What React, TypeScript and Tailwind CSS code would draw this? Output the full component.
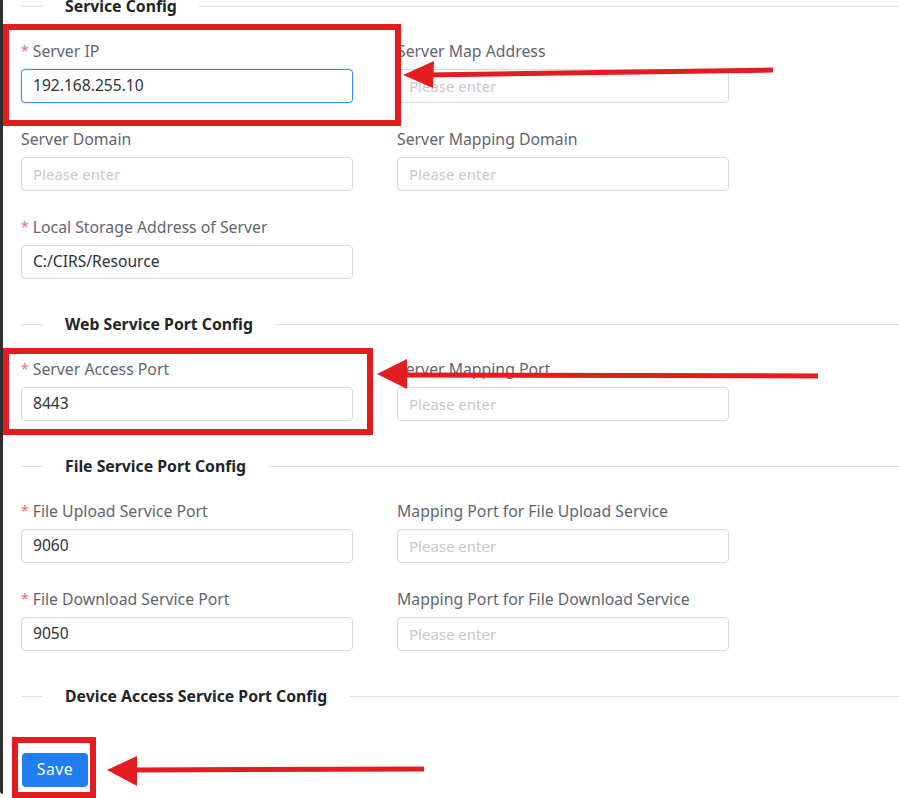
import React from 'react';

type Field = { label: string; required?: boolean; value?: string; focused?: boolean } | null;

const font = { fontFamily: '"Noto Sans", "Open Sans", sans-serif' };

function FormItem({ field }: { field: Field }) {
  if (!field) return <div className="h-[88px]" />;
  return (
    <div className="h-[88px] flex flex-col">
      <label className="h-[22px] mb-[8px] pt-[1px] flex items-center text-[15.8px] leading-[22px] text-[#5f6570]">
        {field.required && <span className="text-[#f56c6c] mr-[4px] text-[14px]">*</span>}
        <span>{field.label}</span>
      </label>
      <div
        className={
          'h-[34px] rounded-[4px] border bg-white flex items-center px-[11px] ' +
          (field.focused
            ? 'border-[#3b8cf2] shadow-[0_0_0_1px_rgba(64,158,255,0.15)]'
            : 'border-[#d4d8df]')
        }
      >
        {field.value ? (
          <span className="text-[15.6px] text-[#2f3237]">{field.value}</span>
        ) : (
          <span className="text-[15px] text-[#c3c8d0]">Please enter</span>
        )}
      </div>
    </div>
  );
}

function Divider({ title }: { title: string }) {
  return (
    <div className="h-[24px] mb-[21px] flex items-center">
      <div className="w-[22px] h-px bg-[#dcdfe6]" />
      <div className="px-[22px] pt-[1px] text-[15.8px] font-bold text-[#222428] whitespace-nowrap">{title}</div>
      <div className="flex-1 h-px bg-[#dcdfe6]" />
    </div>
  );
}

function Section({ title, rows }: { title: string; rows: [Field, Field][] }) {
  return (
    <section className="mb-[9px]">
      <Divider title={title} />
      <div className="grid grid-cols-[332px_332px] gap-x-[44px]">
        {rows.map(([a, b], i) => (
          <React.Fragment key={i}>
            <FormItem field={a} />
            <FormItem field={b} />
          </React.Fragment>
        ))}
      </div>
    </section>
  );
}

export default function App() {
  return (
    <div className="relative w-[899px] h-[798px] overflow-hidden bg-white flex" style={font}>
      <div className="w-[3px] h-[794px] bg-[#2e2e2e] rounded-bl-[3px]" />
      <main className="flex-1 pl-[18px] mt-[-6px]">
        <Section
          title="Service Config"
          rows={[
            [
              { label: 'Server IP', required: true, value: '192.168.255.10', focused: true },
              { label: 'Server Map Address' },
            ],
            [{ label: 'Server Domain' }, { label: 'Server Mapping Domain' }],
            [{ label: 'Local Storage Address of Server', required: true, value: 'C:/CIRS/Resource' }, null],
          ]}
        />
        <Section
          title="Web Service Port Config"
          rows={[[{ label: 'Server Access Port', required: true, value: '8443' }, { label: 'Server Mapping Port' }]]}
        />
        <Section
          title="File Service Port Config"
          rows={[
            [
              { label: 'File Upload Service Port', required: true, value: '9060' },
              { label: 'Mapping Port for File Upload Service' },
            ],
            [
              { label: 'File Download Service Port', required: true, value: '9050' },
              { label: 'Mapping Port for File Download Service' },
            ],
          ]}
        />
        <Divider title="Device Access Service Port Config" />
        <button className="block ml-[1px] mt-[45px] w-[66px] h-[34px] rounded-[4px] bg-[#1f7ef2] text-white text-[15.8px] tracking-[0.5px]">
          Save
        </button>
      </main>

      {/* annotation overlay */}
      <svg className="absolute inset-0 pointer-events-none" width="899" height="798" viewBox="0 0 899 798">
        <g fill="none" stroke="#e31c1f" strokeWidth="6">
          <rect x="6" y="27" width="392" height="96" />
          <rect x="6" y="351" width="364" height="81" />
          <rect x="15" y="740" width="78" height="55" />
        </g>
        <g stroke="#e31c1f" strokeWidth="5">
          <line x1="773" y1="70" x2="428" y2="75" />
          <line x1="818" y1="376" x2="402" y2="375" />
          <line x1="424" y1="769" x2="132" y2="770" />
        </g>
        <g fill="#e31c1f">
          <polygon points="403,75 434,61 433,88" />
          <polygon points="377,374 407,359 407,389" />
          <polygon points="107,770 137,756 137,786" />
        </g>
      </svg>
    </div>
  );
}
